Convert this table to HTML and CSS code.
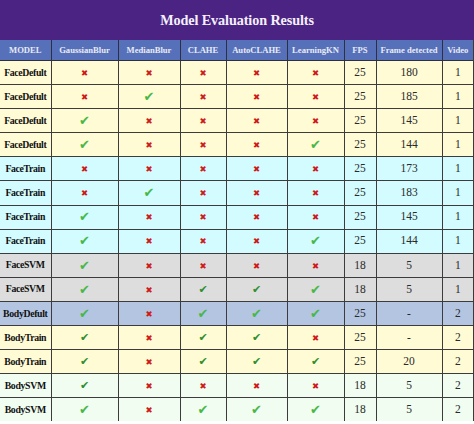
FILE: index.html
```html
<!DOCTYPE html>
<html>
<head>
<meta charset="utf-8">
<link rel="stylesheet" href="styles.css">
</head>
<body>
<div class="title">Model Evaluation Results</div>
<table class="results">
<colgroup>
<col class="c-model"><col class="c-gb"><col class="c-mb"><col class="c-cl"><col class="c-ac"><col class="c-lk"><col class="c-fps"><col class="c-fd"><col class="c-vid">
</colgroup>
<thead>
<tr><th>MODEL</th><th>GaussianBlur</th><th>MedianBlur</th><th>CLAHE</th><th>AutoCLAHE</th><th>LearningKN</th><th>FPS</th><th>Frame detected</th><th>Video</th></tr>
</thead>
<tbody>
<tr class="yellow"><td class="name">FaceDefult</td><td><span class="n">✖</span></td><td><span class="n">✖</span></td><td><span class="n">✖</span></td><td><span class="n">✖</span></td><td><span class="n">✖</span></td><td>25</td><td>180</td><td>1</td></tr>
<tr class="yellow"><td class="name">FaceDefult</td><td><span class="n">✖</span></td><td><span class="y">✔</span></td><td><span class="n">✖</span></td><td><span class="n">✖</span></td><td><span class="n">✖</span></td><td>25</td><td>185</td><td>1</td></tr>
<tr class="yellow"><td class="name">FaceDefult</td><td><span class="y">✔</span></td><td><span class="n">✖</span></td><td><span class="n">✖</span></td><td><span class="n">✖</span></td><td><span class="n">✖</span></td><td>25</td><td>145</td><td>1</td></tr>
<tr class="yellow"><td class="name">FaceDefult</td><td><span class="y">✔</span></td><td><span class="n">✖</span></td><td><span class="n">✖</span></td><td><span class="n">✖</span></td><td><span class="y">✔</span></td><td>25</td><td>144</td><td>1</td></tr>
<tr class="cyan"><td class="name">FaceTrain</td><td><span class="n">✖</span></td><td><span class="n">✖</span></td><td><span class="n">✖</span></td><td><span class="n">✖</span></td><td><span class="n">✖</span></td><td>25</td><td>173</td><td>1</td></tr>
<tr class="cyan"><td class="name">FaceTrain</td><td><span class="n">✖</span></td><td><span class="y">✔</span></td><td><span class="n">✖</span></td><td><span class="n">✖</span></td><td><span class="n">✖</span></td><td>25</td><td>183</td><td>1</td></tr>
<tr class="cyan"><td class="name">FaceTrain</td><td><span class="y">✔</span></td><td><span class="n">✖</span></td><td><span class="n">✖</span></td><td><span class="n">✖</span></td><td><span class="n">✖</span></td><td>25</td><td>145</td><td>1</td></tr>
<tr class="cyan"><td class="name">FaceTrain</td><td><span class="y">✔</span></td><td><span class="n">✖</span></td><td><span class="n">✖</span></td><td><span class="n">✖</span></td><td><span class="y">✔</span></td><td>25</td><td>144</td><td>1</td></tr>
<tr class="gray"><td class="name">FaceSVM</td><td><span class="y">✔</span></td><td><span class="n">✖</span></td><td><span class="n">✖</span></td><td><span class="n">✖</span></td><td><span class="n">✖</span></td><td>18</td><td>5</td><td>1</td></tr>
<tr class="gray"><td class="name">FaceSVM</td><td><span class="y">✔</span></td><td><span class="n">✖</span></td><td><span class="y dark">✔</span></td><td><span class="y dark">✔</span></td><td><span class="y">✔</span></td><td>18</td><td>5</td><td>1</td></tr>
<tr class="blue"><td class="name">BodyDefult</td><td><span class="y">✔</span></td><td><span class="n">✖</span></td><td><span class="y">✔</span></td><td><span class="y">✔</span></td><td><span class="y">✔</span></td><td>25</td><td>-</td><td>2</td></tr>
<tr class="yellow"><td class="name">BodyTrain</td><td><span class="y dark">✔</span></td><td><span class="n">✖</span></td><td><span class="y dark">✔</span></td><td><span class="y dark">✔</span></td><td><span class="n">✖</span></td><td>25</td><td>-</td><td>2</td></tr>
<tr class="yellow"><td class="name">BodyTrain</td><td><span class="y dark">✔</span></td><td><span class="n">✖</span></td><td><span class="y dark">✔</span></td><td><span class="y dark">✔</span></td><td><span class="y dark">✔</span></td><td>25</td><td>20</td><td>2</td></tr>
<tr class="mint"><td class="name">BodySVM</td><td><span class="y dark">✔</span></td><td><span class="n">✖</span></td><td><span class="n">✖</span></td><td><span class="n">✖</span></td><td><span class="n">✖</span></td><td>18</td><td>5</td><td>2</td></tr>
<tr class="mint"><td class="name">BodySVM</td><td><span class="y">✔</span></td><td><span class="n">✖</span></td><td><span class="y">✔</span></td><td><span class="y">✔</span></td><td><span class="y">✔</span></td><td>18</td><td>5</td><td>2</td></tr>
</tbody>
</table>
</body>
</html>
```
FILE: styles.css
```css
html, body {
  margin: 0;
  padding: 0;
  background: #ffffff;
}
body {
  width: 474px;
  height: 424px;
  overflow: hidden;
  font-family: "Liberation Serif", "Times New Roman", serif;
}
.title {
  height: 40px;
  background: #4b2383;
  color: #f4f0fa;
  font-weight: bold;
  font-size: 14.2px;
  display: flex;
  align-items: center;
  justify-content: center;
  letter-spacing: -0.1px;
}
.results {
  width: 474px;
  border-collapse: collapse;
  table-layout: fixed;
}
.c-model { width: 51px; }
.c-gb { width: 67px; }
.c-mb { width: 62px; }
.c-cl { width: 46px; }
.c-ac { width: 61px; }
.c-lk { width: 57px; }
.c-fps { width: 32px; }
.c-fd { width: 66px; }
.c-vid { width: 32px; }

.results th {
  height: 20px;
  padding: 0;
  background: #5670b9;
  color: #e9ebf4;
  font-size: 8.6px;
  font-weight: bold;
  border: 1px solid #2c3040;
  border-top: none;
  text-align: center;
  white-space: nowrap;
  overflow: hidden;
  line-height: 1;
}
.results th:first-child { border-left: none; }
.results td:first-child { border-left: none; }
.results th:last-child, .results td:last-child { border-right: 2px solid #3a3a3a; }

.results td {
  height: 23.1px;
  padding: 0;
  border: 1px solid #3c3c3c;
  text-align: center;
  font-size: 11.5px;
  color: #2a2a2a;
  line-height: 1;
}
.results tbody tr:last-child td { border-bottom: none; }
.results td.name {
  font-weight: bold;
  font-size: 9.8px;
  letter-spacing: -0.35px;
  color: #111111;
}
.yellow td { background: #fffbd5; }
.cyan td { background: #d2fcff; }
.gray td { background: #dddddd; }
.blue td { background: #b3c5e1; }
.mint td { background: #f0fdf0; }

.y {
  color: #47b847;
  font-size: 13px;
  line-height: 1;
  font-family: "DejaVu Sans", sans-serif;
}
.y.dark {
  color: #2f8f2f;
  font-size: 11px;
}
.n {
  color: #d01818;
  font-size: 8.5px;
  line-height: 1;
  font-family: "DejaVu Sans", sans-serif;
}
```
